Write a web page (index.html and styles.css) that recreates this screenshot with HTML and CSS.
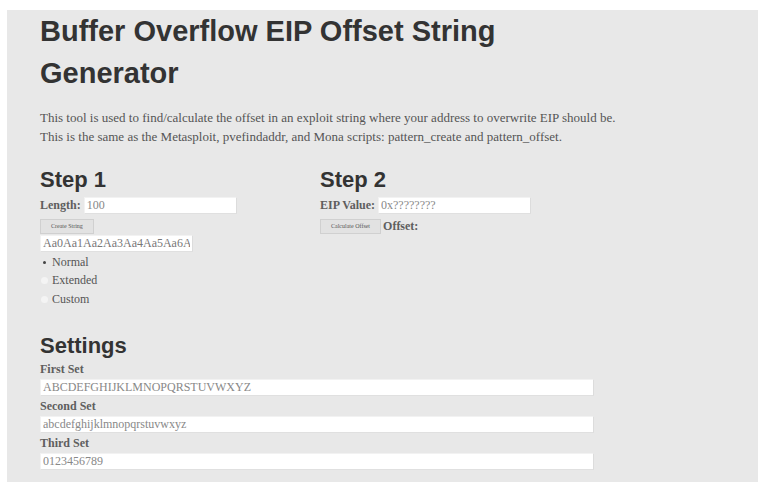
FILE: index.html
```html
<!DOCTYPE html>
<html>
<head>
<meta charset="utf-8">
<title>Buffer Overflow EIP Offset String Generator</title>
<link rel="stylesheet" href="styles.css">
</head>
<body>
<div class="panel">
  <h1 class="title">Buffer Overflow EIP Offset String Generator</h1>
  <p class="desc">This tool is used to find/calculate the offset in an exploit string where your address to overwrite EIP should be.<br>This is the same as the Metasploit, pvefindaddr, and Mona scripts: pattern_create and pattern_offset.</p>
  <div class="steps">
    <section class="step step-one">
      <h2 class="heading">Step 1</h2>
      <div class="row">
        <label class="lbl">Length:</label>
        <input class="field short" type="text" value="100">
      </div>
      <div class="row btn-row">
        <button class="btn">Create String</button>
      </div>
      <input class="field short result" type="text" value="Aa0Aa1Aa2Aa3Aa4Aa5Aa6Aa7Aa8Aa9">
      <div class="radios">
        <label class="radio"><span class="dot on"></span>Normal</label>
        <label class="radio"><span class="dot"></span>Extended</label>
        <label class="radio"><span class="dot"></span>Custom</label>
      </div>
    </section>
    <section class="step">
      <h2 class="heading">Step 2</h2>
      <div class="row">
        <label class="lbl">EIP Value:</label>
        <input class="field short" type="text" value="0x????????">
      </div>
      <div class="row btn-row">
        <button class="btn">Calculate Offset</button>
        <span class="lbl">Offset:</span>
      </div>
    </section>
  </div>
  <section class="settings">
    <h2 class="heading">Settings</h2>
    <label class="lbl block">First Set</label>
    <input class="field wide" type="text" value="ABCDEFGHIJKLMNOPQRSTUVWXYZ">
    <label class="lbl block">Second Set</label>
    <input class="field wide" type="text" value="abcdefghijklmnopqrstuvwxyz">
    <label class="lbl block">Third Set</label>
    <input class="field wide" type="text" value="0123456789">
  </section>
</div>
</body>
</html>
```

FILE: styles.css
```css
html, body {
  margin: 0;
  padding: 0;
  background: #ffffff;
}

.panel {
  margin: 10px 10px 7px 7px;
  padding: 0 0 12px 33px;
  background: #e8e8e8;
  font-family: "Liberation Serif", "DejaVu Serif", serif;
  color: #555;
}

.title {
  margin: 0;
  width: 540px;
  font-family: "Liberation Sans", Arial, sans-serif;
  font-size: 29px;
  font-weight: bold;
  line-height: 42px;
  color: #333;
}

.desc {
  margin: 14px 0 0;
  font-size: 13px;
  line-height: 19px;
  color: #555;
}

.steps {
  display: flex;
  margin-top: 21px;
}

.step-one {
  width: 280px;
}

.heading {
  margin: 0;
  font-family: "Liberation Sans", Arial, sans-serif;
  font-size: 22px;
  font-weight: bold;
  line-height: 26px;
  color: #333;
}

.row {
  display: flex;
  align-items: center;
  gap: 3px;
  height: 19px;
  margin-top: 3px;
}

.btn-row {
  margin-top: 3px;
  height: 16px;
  gap: 2px;
}

.lbl {
  font-size: 12px;
  font-weight: bold;
  color: #5e5e5e;
  line-height: 19px;
}

.field {
  box-sizing: border-box;
  height: 17px;
  margin: 0;
  padding: 0 2px;
  border: 1px solid #f2f2f2;
  border-right-color: #dcdcdc;
  border-bottom-color: #e0e0e0;
  background: #fff;
  font-family: "Liberation Serif", "DejaVu Serif", serif;
  font-size: 12px;
  color: #888;
  outline: none;
}

.short {
  width: 153px;
}

.result {
  display: block;
  margin-top: 1px;
  color: #777;
}

.btn {
  box-sizing: border-box;
  height: 15px;
  margin: 0;
  padding: 0 10px;
  border: 1px solid #d0d0d0;
  background: #e2e2e2;
  font-family: "Liberation Serif", serif;
  font-size: 6px;
  color: #555;
}

.radios {
  display: flex;
  flex-direction: column;
  margin-top: 1px;
}

.radio {
  display: flex;
  align-items: center;
  height: 18.5px;
  font-size: 12px;
  color: #555;
}

.dot {
  position: relative;
  width: 7px;
  height: 7px;
  margin: 0 4px 0 1px;
  border-radius: 50%;
  background: #f4f4f4;
}

.dot.on {
  background: transparent;
}

.dot.on::after {
  content: "";
  position: absolute;
  left: 2px;
  top: 2px;
  width: 3px;
  height: 3px;
  border-radius: 50%;
  background: #444;
}

.settings {
  margin-top: 24px;
}

.block {
  display: block;
  line-height: 20px;
}

.wide {
  display: block;
  width: 554px;
}
```
